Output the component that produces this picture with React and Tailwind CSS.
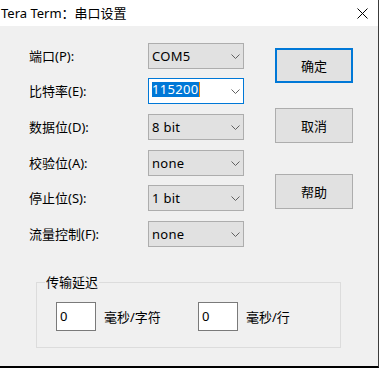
import React from "react";

const rows = [
  { label: "端口(P):", value: "COM5", mt: "" },
  { label: "比特率(E):", value: "115200", mt: "mt-[9px]", focus: true },
  { label: "数据位(D):", value: "8 bit", mt: "mt-[10px]" },
  { label: "校验位(A):", value: "none", mt: "mt-[10px]" },
  { label: "停止位(S):", value: "1 bit", mt: "mt-[9px]" },
  { label: "流量控制(F):", value: "none", mt: "mt-[10px]" },
];

function Chevron() {
  return (
    <svg width="9" height="5" viewBox="0 0 9 5" className="shrink-0">
      <path d="M0.5 0.5 L4.5 4.5 L8.5 0.5" fill="none" stroke="#606060" strokeWidth="1" />
    </svg>
  );
}

function Combo({ value, focus }) {
  if (focus) {
    return (
      <div className="w-[96px] h-[26px] border border-[#0078d7] bg-white flex items-start pl-[3px] pr-[3px]">
        <div className="mt-[3px] flex items-stretch h-[15px]">
          <span className="bg-[#0078d7] text-white leading-[15px] pr-[1px] tracking-[0.3px]">{value}</span>
          <span className="w-[1px] bg-[#ff8c00]" />
        </div>
        <div className="flex-1" />
        <div className="self-center">
          <Chevron />
        </div>
      </div>
    );
  }
  return (
    <div className="w-[96px] h-[26px] border border-[#adadad] bg-[#e1e1e1] flex items-center pl-[3px] pr-[3px]">
      <span className="leading-[16px] tracking-[0.3px]">{value}</span>
      <div className="flex-1" />
      <Chevron />
    </div>
  );
}

function Button({ children, primary, mt }) {
  return (
    <div
      className={
        primary
          ? "w-[78px] h-[35px] border-2 border-[#0078d7] bg-[#e1e1e1] flex items-center justify-center leading-[16px]"
          : "w-[78px] h-[35px] border border-[#adadad] bg-[#e1e1e1] flex items-center justify-center leading-[16px] " + mt
      }
    >
      {children}
    </div>
  );
}

export default function App() {
  return (
    <div className="w-[379px] h-[368px] flex flex-col border-r border-r-[#3c3c3c] border-b-2 border-b-black text-black text-[13px] font-['Noto_Sans','Noto_Sans_CJK_SC',sans-serif]">
      <div className="h-[26px] bg-white flex items-center pl-[1px] pr-[10px] shrink-0">
        <span className="text-[13px] leading-[16px]">Tera Term：串口设置</span>
        <div className="flex-1" />
        <svg width="11" height="11" viewBox="0 0 11 11">
          <path d="M0.5 0.5 L10.5 10.5 M10.5 0.5 L0.5 10.5" stroke="#000" strokeWidth="1" />
        </svg>
      </div>
      <div className="flex-1 bg-[#f0f0f0] flex flex-col">
        <div className="flex pt-[17px] pl-[29px]">
          <div className="flex flex-col">
            {rows.map((r) => (
              <div key={r.label} className={"flex items-center h-[26px] " + r.mt}>
                <div className="w-[119px] leading-[16px]">{r.label}</div>
                <Combo value={r.value} focus={r.focus} />
              </div>
            ))}
          </div>
          <div className="flex flex-col ml-[31px] pt-[5px]">
            <Button primary>确定</Button>
            <Button mt="mt-[25px]">取消</Button>
            <Button mt="mt-[31px]">帮助</Button>
          </div>
        </div>
        <div className="relative mt-[35px] ml-[36px] w-[305px] h-[66px] border border-[#dcdcdc] flex pt-[19px] pl-[19px]">
          <div className="absolute left-[8px] top-[-9px] px-[1px] bg-[#f0f0f0] leading-[16px]">传输延迟</div>
          <div className="flex items-start w-[142px]">
            <div className="w-[40px] h-[29px] border border-[#7a7a7a] bg-white flex items-center pl-[3px] pb-[2px] leading-[16px]">0</div>
            <div className="ml-[8px] h-[29px] flex items-center leading-[16px]">毫秒/字符</div>
          </div>
          <div className="flex items-start">
            <div className="w-[40px] h-[29px] border border-[#7a7a7a] bg-white flex items-center pl-[3px] pb-[2px] leading-[16px]">0</div>
            <div className="ml-[8px] h-[29px] flex items-center leading-[16px]">毫秒/行</div>
          </div>
        </div>
      </div>
    </div>
  );
}
